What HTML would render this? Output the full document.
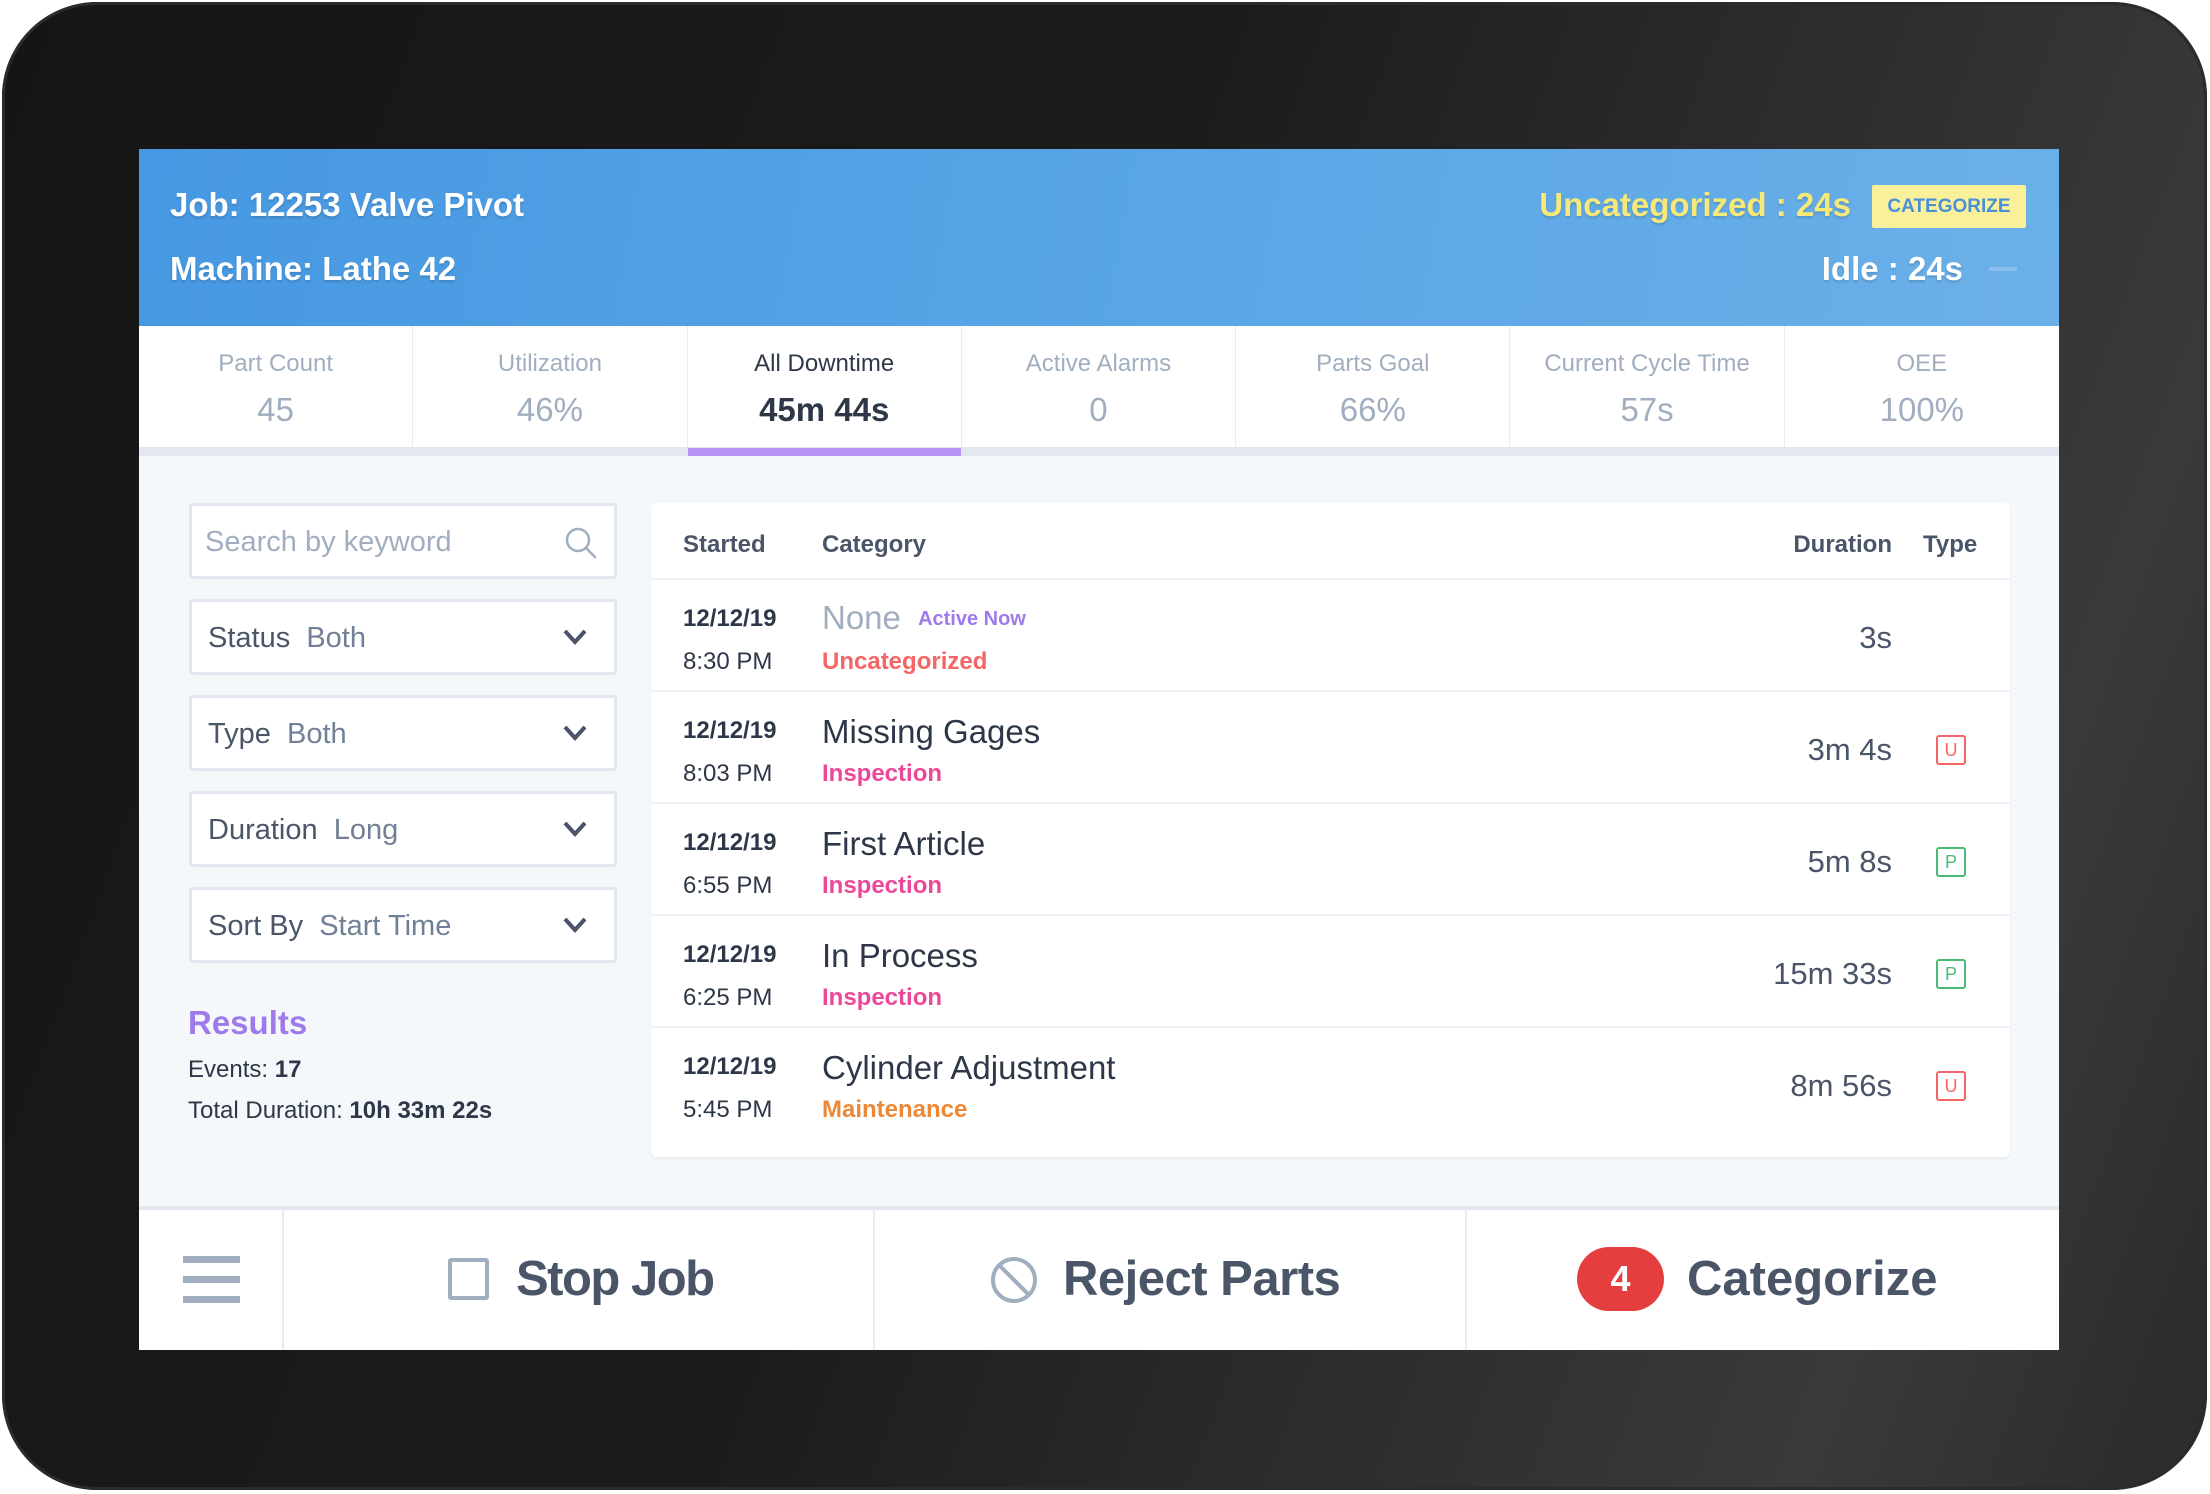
<!DOCTYPE html>
<html><head><meta charset="utf-8"><style>
*{box-sizing:border-box;margin:0;padding:0}
html,body{width:2210px;height:1494px;background:#fff;overflow:hidden;font-family:"Liberation Sans",sans-serif}
.frame{position:absolute;left:2px;top:2px;width:2205px;height:1488px;border-radius:95px;background:linear-gradient(110deg,#151515 0%,#1c1c1c 45%,#3a3a3a 85%,#2a2a2a 100%);box-shadow:inset 0 0 0 3px #2b2b2b}
.screen{position:absolute;left:139px;top:149px;width:1920px;height:1201px;background:#f5f8fb;overflow:hidden}
.hdr{position:absolute;left:0;top:0;width:1920px;height:177px;background:linear-gradient(100deg,#4698e2 0%,#5aa6e6 55%,#6bb0e8 100%)}
.hdr .t{position:absolute;color:#fff;font-weight:bold;font-size:33px;text-shadow:0 2px 2px rgba(0,0,0,.15)}
.stats{position:absolute;left:0;top:177px;width:1920px;height:130px;background:#fff;border-bottom:9px solid #e3e7ef;display:flex}
.st{width:274.3px;border-right:1px solid #e8ebf1;text-align:center;position:relative;color:#a0aec0}
.st .l{position:absolute;top:24px;width:100%;font-size:24px}
.st .v{position:absolute;top:65px;width:100%;font-size:33px}
.st.a{color:#2d3748}.st.a .v{font-weight:bold}
.st.a:after{content:"";position:absolute;left:0;right:0;bottom:-9px;height:8px;background:#b794f4}
.inp{position:absolute;left:50px;width:428px;height:76px;background:#fff;border:3px solid #e2e6ee;border-radius:4px;font-size:29px;color:#4a5568;padding:0 0 0 16px;line-height:72px}
.inp b{font-weight:normal;color:#718096}
.inp svg{position:absolute;right:26px;top:26px}
.card{position:absolute;left:512px;top:354px;width:1359px;height:654px;background:#fff;border-radius:6px;box-shadow:0 2px 3px rgba(0,0,0,.05)}
.th{position:absolute;top:28px;font-weight:bold;font-size:24px;color:#4a5568}
.row{position:absolute;left:0;width:1359px;height:112px;border-top:2px solid #eef1f5}
.row .d{position:absolute;left:32px;top:25px;font-size:24px;font-weight:bold;color:#2d3748}
.row .tm{position:absolute;left:32px;top:68px;font-size:24px;color:#2d3748}
.row .n{position:absolute;left:171px;top:21px;font-size:33px;color:#2d3748}
.row .c{position:absolute;left:171px;top:68px;font-size:24px;font-weight:bold;color:#ec4899}
.row .du{position:absolute;right:118px;top:40px;font-size:31px;color:#4a5568}
.row .ty{position:absolute;left:1285px;top:43px;width:30px;height:30px;border:2px solid;border-radius:3px;font-size:18px;text-align:center;line-height:26px}
.u{color:#f56565;border-color:#fed7d7}.p{color:#48bb78;border-color:#c6f6d5}
.bot{position:absolute;left:0;top:1057px;width:1920px;height:144px;background:#fff;border-top:4px solid #e3e7ef}
.sep{position:absolute;top:0;bottom:0;width:2px;background:#e8ebf3}
.bt{position:absolute;top:41px;font-size:49px;font-weight:bold;color:#4a5568}
</style></head><body>
<div class="frame"></div>
<div class="screen">
 <div class="hdr">
  <div class="t" style="left:31px;top:37px">Job: 12253 Valve Pivot</div>
  <div class="t" style="left:31px;top:101px">Machine: Lathe 42</div>
  <div class="t" style="right:208px;top:37px;color:#f6e978">Uncategorized : 24s</div>
  <div style="position:absolute;left:1733px;top:36px;width:154px;height:43px;background:#fbf09a;color:#4a90d9;font-size:19px;font-weight:bold;text-align:center;line-height:43px;border-radius:2px">CATEGORIZE</div>
  <div class="t" style="right:96px;top:101px">Idle : 24s</div>
  <div style="position:absolute;left:1850px;top:118px;width:28px;height:4px;background:#8cc0ee"></div>
 </div>
 <div class="stats">
  <div class="st"><div class="l">Part Count</div><div class="v">45</div></div>
  <div class="st"><div class="l">Utilization</div><div class="v">46%</div></div>
  <div class="st a"><div class="l">All Downtime</div><div class="v">45m 44s</div></div>
  <div class="st"><div class="l">Active Alarms</div><div class="v">0</div></div>
  <div class="st"><div class="l">Parts Goal</div><div class="v">66%</div></div>
  <div class="st"><div class="l">Current Cycle Time</div><div class="v">57s</div></div>
  <div class="st" style="border:none"><div class="l">OEE</div><div class="v">100%</div></div>
 </div>
 <div class="inp" style="top:354px;color:#a0aec0;padding-left:13px">Search by keyword<svg width="34" height="34" viewBox="0 0 34 34" style="top:20px;right:16px"><circle cx="14" cy="14" r="11" fill="none" stroke="#a0aec0" stroke-width="2.5"/><path d="M22 22l9 9" stroke="#a0aec0" stroke-width="2.5" stroke-linecap="round"/></svg></div>
 <div class="inp" style="top:450px">Status&nbsp; <b>Both</b><svg width="26" height="18" viewBox="0 0 26 18"><path d="M3 3l10 11 10-11" fill="none" stroke="#4a5568" stroke-width="4"/></svg></div>
 <div class="inp" style="top:546px">Type&nbsp; <b>Both</b><svg width="26" height="18" viewBox="0 0 26 18"><path d="M3 3l10 11 10-11" fill="none" stroke="#4a5568" stroke-width="4"/></svg></div>
 <div class="inp" style="top:642px">Duration&nbsp; <b>Long</b><svg width="26" height="18" viewBox="0 0 26 18"><path d="M3 3l10 11 10-11" fill="none" stroke="#4a5568" stroke-width="4"/></svg></div>
 <div class="inp" style="top:738px">Sort By&nbsp; <b>Start Time</b><svg width="26" height="18" viewBox="0 0 26 18"><path d="M3 3l10 11 10-11" fill="none" stroke="#4a5568" stroke-width="4"/></svg></div>
 <div style="position:absolute;left:49px;top:855px;font-size:33px;font-weight:bold;color:#9f7aea">Results</div>
 <div style="position:absolute;left:49px;top:907px;font-size:24px;color:#2d3748">Events: <b>17</b></div>
 <div style="position:absolute;left:49px;top:948px;font-size:24px;color:#2d3748">Total Duration: <b>10h 33m 22s</b></div>
 <div class="card">
  <div class="th" style="left:32px">Started</div>
  <div class="th" style="left:171px">Category</div>
  <div class="th" style="right:118px">Duration</div>
  <div class="th" style="left:1272px">Type</div>
  <div class="row" style="top:75px"><div class="d">12/12/19</div><div class="tm">8:30 PM</div><div class="n" style="color:#a0aec0;top:19px">None <span style="font-size:20px;font-weight:bold;color:#9f7aea;margin-left:8px;vertical-align:4px">Active Now</span></div><div class="c" style="color:#f56565">Uncategorized</div><div class="du">3s</div></div>
  <div class="row" style="top:187px"><div class="d">12/12/19</div><div class="tm">8:03 PM</div><div class="n">Missing Gages</div><div class="c">Inspection</div><div class="du">3m 4s</div><div class="ty u">U</div></div>
  <div class="row" style="top:299px"><div class="d">12/12/19</div><div class="tm">6:55 PM</div><div class="n">First Article</div><div class="c">Inspection</div><div class="du">5m 8s</div><div class="ty p">P</div></div>
  <div class="row" style="top:411px"><div class="d">12/12/19</div><div class="tm">6:25 PM</div><div class="n">In Process</div><div class="c">Inspection</div><div class="du">15m 33s</div><div class="ty p">P</div></div>
  <div class="row" style="top:523px"><div class="d">12/12/19</div><div class="tm">5:45 PM</div><div class="n">Cylinder Adjustment</div><div class="c" style="color:#ed8936">Maintenance</div><div class="du">8m 56s</div><div class="ty u">U</div></div>
 </div>
 <div class="bot">
  <div style="position:absolute;left:44px;top:46px;width:57px;height:7px;background:#a0aec0"></div>
  <div style="position:absolute;left:44px;top:66px;width:57px;height:7px;background:#a0aec0"></div>
  <div style="position:absolute;left:44px;top:86px;width:57px;height:7px;background:#a0aec0"></div>
  <div class="sep" style="left:143px"></div>
  <div class="sep" style="left:734px"></div>
  <div class="sep" style="left:1326px"></div>
  <div style="position:absolute;left:309px;top:48px;width:41px;height:42px;border:4px solid #a0aec0;border-radius:3px"></div>
  <div class="bt" style="left:377px;letter-spacing:-1.5px">Stop Job</div>
  <svg style="position:absolute;left:851px;top:46px" width="48" height="48" viewBox="0 0 48 48"><circle cx="24" cy="24" r="21" fill="none" stroke="#a0aec0" stroke-width="4"/><path d="M9 9l30 30" stroke="#a0aec0" stroke-width="4"/></svg>
  <div class="bt" style="left:924px;letter-spacing:-0.5px">Reject Parts</div>
  <div style="position:absolute;left:1438px;top:37px;width:87px;height:64px;border-radius:32px;background:#e53e3e;color:#fff;font-size:36px;font-weight:bold;text-align:center;line-height:64px">4</div>
  <div class="bt" style="left:1548px">Categorize</div>
 </div>
</div>
</body></html>
